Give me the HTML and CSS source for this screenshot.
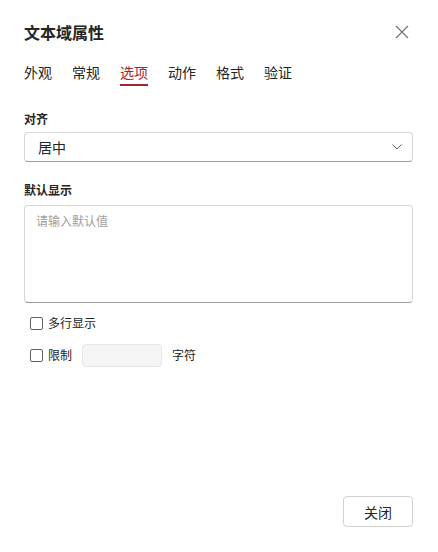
FILE: index.html
```html
<!DOCTYPE html>
<html lang="zh-CN">
<head>
<meta charset="utf-8">
<title>文本域属性</title>
<link rel="stylesheet" href="styles.css">
</head>
<body>
<div class="dialog">
  <div class="header">
    <div class="title">文本域属性</div>
    <svg class="close" width="14" height="14" viewBox="0 0 14 14"><path d="M1 1 L13 13 M13 1 L1 13" stroke="#707070" stroke-width="1.1" fill="none"/></svg>
  </div>
  <div class="tabs">
    <div class="tab">外观</div>
    <div class="tab">常规</div>
    <div class="tab active">选项</div>
    <div class="tab">动作</div>
    <div class="tab">格式</div>
    <div class="tab">验证</div>
  </div>
  <div class="label first">对齐</div>
  <div class="select">
    <span>居中</span>
    <svg width="10" height="6" viewBox="0 0 10 6"><path d="M0.5 0.5 L5 5 L9.5 0.5" stroke="#616161" stroke-width="1" fill="none"/></svg>
  </div>
  <div class="label second">默认显示</div>
  <div class="textarea"><span class="placeholder">请输入默认值</span></div>
  <div class="check-row one">
    <span class="box"></span><span class="ctext">多行显示</span>
  </div>
  <div class="check-row two">
    <span class="box"></span><span class="ctext">限制</span>
    <span class="num"></span>
    <span class="ctext unit">字符</span>
  </div>
  <div class="footer">
    <div class="btn">关闭</div>
  </div>
</div>
</body>
</html>
```
FILE: styles.css
```css
* { box-sizing: border-box; }
html, body { margin: 0; padding: 0; background: #fff; }
body {
  font-family: "Noto Sans CJK SC", "Noto Sans", sans-serif;
  color: #242424;
  width: 438px;
  height: 552px;
  overflow: hidden;
}
.dialog {
  height: 552px;
  padding: 24px 25px 25px 24px;
  display: flex;
  flex-direction: column;
}
.header {
  display: flex;
  justify-content: space-between;
  align-items: center;
  height: 16px;
}
.title {
  font-size: 16px;
  line-height: 16px;
  font-weight: 700;
}
.close { margin-right: 4px; margin-top: 0; }
.tabs {
  display: flex;
  gap: 20px;
  margin-top: 22px;
}
.tab {
  font-size: 14px;
  line-height: 20px;
  padding-bottom: 2px;
  border-bottom: 2px solid transparent;
  color: #242424;
}
.tab.active {
  color: #a4262c;
  border-bottom-color: #a4262c;
}
.label {
  font-size: 12px;
  line-height: 16px;
  font-weight: 700;
}
.label.first { margin-top: 25px; }
.label.second { margin-top: 20px; }
.select {
  margin-top: 5px;
  height: 30px;
  border: 1px solid #d6d6d6;
  border-bottom-color: #9a9a9a;
  border-radius: 4px;
  display: flex;
  align-items: center;
  justify-content: space-between;
  padding: 0 10px 0 13px;
  font-size: 14px;
}
.textarea {
  margin-top: 7px;
  height: 98px;
  border: 1px solid #d6d6d6;
  border-bottom-color: #9a9a9a;
  border-radius: 4px;
  padding: 7px 11px;
  font-size: 12px;
  line-height: 16px;
}
.placeholder {
  color: #a0a0a0;
}
.check-row {
  display: flex;
  align-items: center;
  padding-left: 6px;
  font-size: 12px;
}
.check-row.one { margin-top: 10px; height: 20px; }
.check-row.two { margin-top: 10px; height: 24px; }
.box {
  width: 13px;
  height: 13px;
  border: 1px solid #616161;
  border-radius: 2px;
  margin-right: 5px;
}
.ctext { line-height: 16px; }
.num {
  width: 80px;
  height: 23px;
  margin-left: 10px;
  background: #f5f5f5;
  border: 1px solid #e6e6e6;
  border-radius: 4px;
}
.unit { margin-left: 10px; }
.footer {
  margin-top: auto;
  display: flex;
  justify-content: flex-end;
}
.btn {
  width: 70px;
  height: 31px;
  border: 1px solid #d1d1d1;
  border-radius: 4px;
  font-size: 14px;
  display: flex;
  align-items: center;
  justify-content: center;
}
```
